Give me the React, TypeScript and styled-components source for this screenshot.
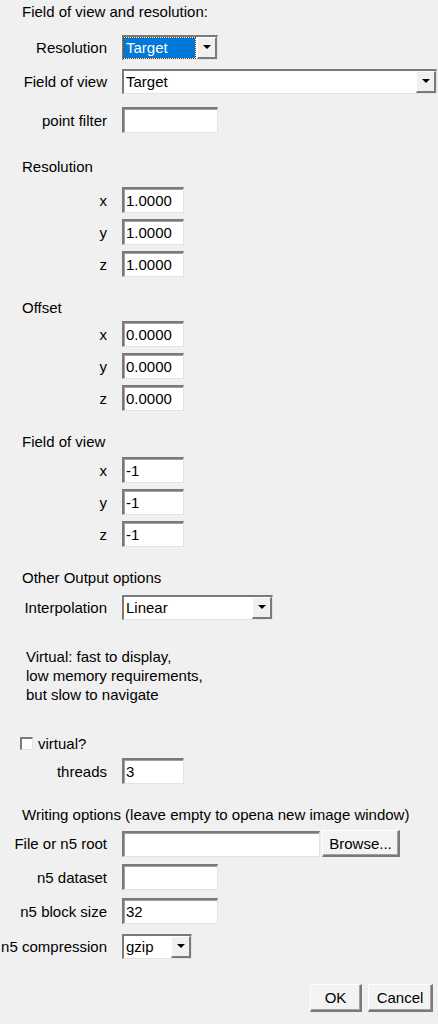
import React from "react";
import styled, { createGlobalStyle } from "styled-components";

const GlobalStyle = createGlobalStyle`
  html, body {
    margin: 0;
    padding: 0;
    background: #f0f0f0;
  }
  body {
    font-family: "Liberation Sans", Arial, sans-serif;
    font-size: 15px;
    color: #000000;
  }
`;

const Dialog = styled.div`
  width: 438px;
  height: 1024px;
  overflow: hidden;
  display: flex;
  flex-direction: column;
  padding-top: 3px;
  box-sizing: border-box;
  background: #f0f0f0;
`;

interface RowProps {
  $mt: number;
  $h: number;
}

const Row = styled.div<RowProps>`
  display: flex;
  align-items: center;
  height: ${props => props.$h}px;
  margin-top: ${props => props.$mt}px;
  flex: none;
`;

const Heading = styled.div<{ $mt: number }>`
  height: 18px;
  line-height: 18px;
  padding-left: 22px;
  margin-top: ${props => props.$mt}px;
  white-space: nowrap;
  flex: none;
`;

const Label = styled.div`
  width: 107px;
  flex: none;
  display: flex;
  justify-content: flex-end;
  white-space: nowrap;
  margin-right: 15px;
`;

const TextField = styled.input<{ $w: number }>`
  width: ${props => props.$w}px;
  height: 26px;
  box-sizing: border-box;
  margin: 0;
  padding: 0 2px 1px 2px;
  font-family: "Liberation Sans", Arial, sans-serif;
  font-size: 15px;
  color: #000000;
  background: #ffffff;
  border-style: solid;
  border-width: 2px 1px 1px 2px;
  border-color: #7a7a7a #e3e3e3 #e3e3e3 #7a7a7a;
  box-shadow: inset 1px 1px 0 #a0a0a0;
  outline: none;
`;

const ChoiceBox = styled.div<{ $w: number }>`
  width: ${props => props.$w}px;
  height: 25px;
  box-sizing: border-box;
  display: flex;
  align-items: stretch;
  background: #ffffff;
  border-style: solid;
  border-width: 2px 1px 1px 2px;
  border-color: #7a7a7a #e3e3e3 #e3e3e3 #7a7a7a;
`;

const ChoiceText = styled.div<{ $focused?: boolean }>`
  flex: 1;
  display: flex;
  align-items: center;
  padding-left: 2px;
  margin: 1px 2px 1px 0;
  white-space: nowrap;
  overflow: hidden;
  background: ${props => (props.$focused ? "#0078d7" : "transparent")};
  color: ${props => (props.$focused ? "#ffffff" : "#000000")};
  outline: ${props => (props.$focused ? "1px dotted #5a3a00" : "none")};
`;

const ArrowButton = styled.div`
  width: 20px;
  flex: none;
  box-sizing: border-box;
  display: flex;
  align-items: center;
  justify-content: center;
  background: #f0f0f0;
  border-style: solid;
  border-width: 1px 2px 2px 1px;
  border-color: #ffffff #7a7a7a #7a7a7a #ffffff;
`;

const Arrow = styled.div`
  width: 0;
  height: 0;
  border-left: 4px solid transparent;
  border-right: 4px solid transparent;
  border-top: 4px solid #000000;
`;

const Message = styled.div`
  margin-top: 28px;
  padding-left: 26px;
  line-height: 19px;
  flex: none;
`;

const CheckRow = styled.label`
  display: flex;
  align-items: center;
  height: 18px;
  margin-top: 30px;
  padding-left: 20px;
  flex: none;
`;

const CheckBox = styled.span`
  width: 13px;
  height: 13px;
  box-sizing: border-box;
  background: #ffffff;
  border-style: solid;
  border-width: 2px 1px 1px 2px;
  border-color: #7a7a7a #e3e3e3 #e3e3e3 #7a7a7a;
  margin-right: 5px;
`;

const Button = styled.button<{ $w: number; $h?: number }>`
  width: ${props => props.$w}px;
  height: ${props => props.$h ?? 28}px;
  box-sizing: border-box;
  margin: 0;
  padding: 0;
  font-family: "Liberation Sans", Arial, sans-serif;
  font-size: 15px;
  color: #000000;
  background: #f3f3f3;
  border-style: solid;
  border-width: 1px 2px 2px 1px;
  border-color: #ffffff #7a7a7a #7a7a7a #ffffff;
  box-shadow: inset -1px -1px 0 #a0a0a0;
`;

const ButtonBar = styled.div`
  display: flex;
  justify-content: flex-end;
  gap: 6px;
  padding-right: 5px;
  margin-top: 26px;
  flex: none;
`;

const Choice: React.FC<{ w: number; value: string; focused?: boolean }> = ({ w, value, focused }) => (
  <ChoiceBox $w={w}>
    <ChoiceText $focused={focused}>{value}</ChoiceText>
    <ArrowButton>
      <Arrow />
    </ArrowButton>
  </ChoiceBox>
);

const Field: React.FC<{ label: string; value: string; w?: number; mt: number }> = ({ label, value, w = 62, mt }) => (
  <Row $mt={mt} $h={26}>
    <Label>{label}</Label>
    <TextField $w={w} value={value} readOnly />
  </Row>
);

const XYZ: React.FC<{ values: string[]; first: number }> = ({ values, first }) => (
  <>
    <Field label="x" value={values[0]} mt={first} />
    <Field label="y" value={values[1]} mt={6} />
    <Field label="z" value={values[2]} mt={6} />
  </>
);

export default function App() {
  return (
    <>
      <GlobalStyle />
      <Dialog>
        <Heading $mt={0}>Field of view and resolution:</Heading>
        <Row $mt={14} $h={24}>
          <Label>Resolution</Label>
          <Choice w={96} value="Target" focused />
        </Row>
        <Row $mt={10} $h={24}>
          <Label>Field of view</Label>
          <Choice w={315} value="Target" />
        </Row>
        <Field label="point filter" value="" w={96} mt={14} />

        <Heading $mt={25}>Resolution</Heading>
        <XYZ values={["1.0000", "1.0000", "1.0000"]} first={11} />

        <Heading $mt={22}>Offset</Heading>
        <XYZ values={["0.0000", "0.0000", "0.0000"]} first={4} />

        <Heading $mt={22}>Field of view</Heading>
        <XYZ values={["-1", "-1", "-1"]} first={6} />

        <Heading $mt={22}>Other Output options</Heading>
        <Row $mt={8} $h={24}>
          <Label>Interpolation</Label>
          <Choice w={151} value="Linear" />
        </Row>

        <Message>
          Virtual: fast to display,
          <br />
          low memory requirements,
          <br />
          but slow to navigate
        </Message>

        <CheckRow>
          <CheckBox />
          virtual?
        </CheckRow>
        <Field label="threads" value="3" mt={6} />

        <Heading $mt={22}>Writing options (leave empty to opena new image window)</Heading>
        <Row $mt={6} $h={27}>
          <Label>File or n5 root</Label>
          <TextField $w={198} value="" readOnly />
          <Button $w={78} $h={27} style={{ marginLeft: 2 }}>Browse...</Button>
        </Row>
        <Field label="n5 dataset" value="" w={96} mt={7} />
        <Field label="n5 block size" value="32" w={96} mt={8} />
        <Row $mt={10} $h={24}>
          <Label>n5 compression</Label>
          <Choice w={70} value="gzip" />
        </Row>

        <ButtonBar>
          <Button $w={52}>OK</Button>
          <Button $w={65}>Cancel</Button>
        </ButtonBar>
      </Dialog>
    </>
  );
}
